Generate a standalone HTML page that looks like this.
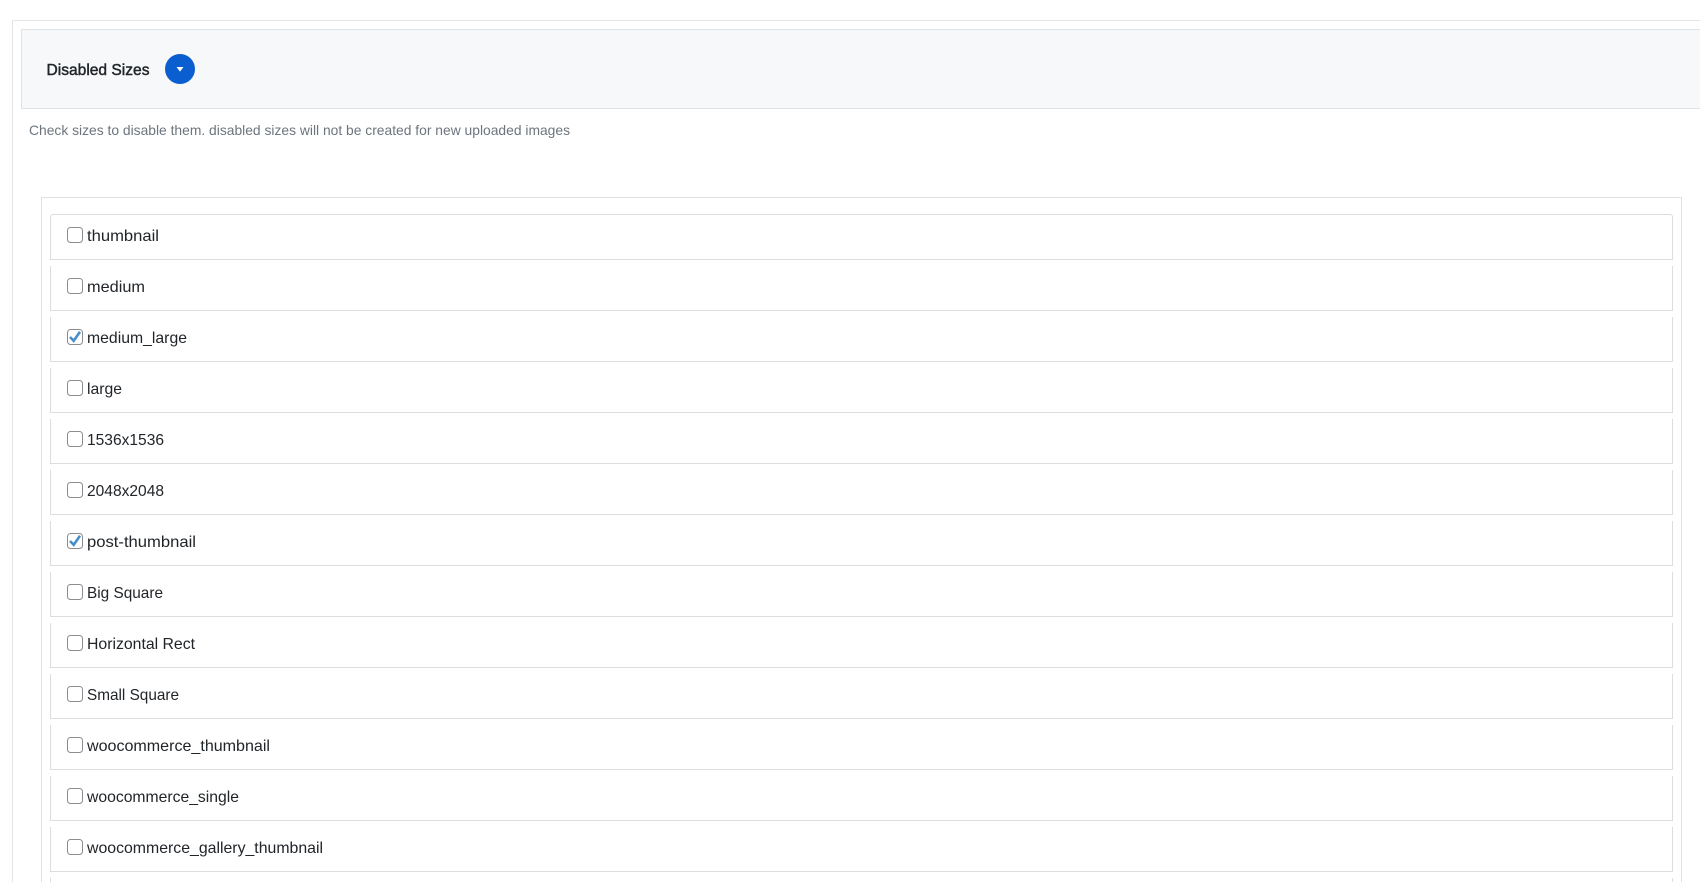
<!DOCTYPE html>
<html lang="en">
<head>
<meta charset="utf-8">
<title>Disabled Sizes</title>
<style>
html,body{margin:0;padding:0;width:1700px;height:882px;overflow:hidden;background:#fff}
#page{position:relative;width:1700px;height:882px;overflow:hidden;background:#fff}
.a{position:absolute;box-sizing:border-box}
#outer{left:12px;top:20px;width:1700px;height:900px;border:1px solid #e3e5ea}
#head{left:21px;top:29px;width:1700px;height:80px;background:#f7f8fa;border:1px solid #dfe2e7}
#inner{left:41px;top:197px;width:1641px;height:720px;border:1px solid #e0e0e0}
.it{left:50px;width:1623px;border-left:1px solid #ddd;border-right:1px solid #ddd;border-bottom:1px solid #ddd}
.cb{left:67px;width:16px;height:16px;border:1px solid #8c8c8c;border-radius:3.5px;background:#fff}
svg{position:absolute;left:0;top:0}
text{font-family:"Liberation Sans",sans-serif}
</style>
</head>
<body>
<div id="page">
<div class="a" id="outer"></div>
<div class="a" id="head"></div>
<div class="a" id="inner"></div>

<div class="a it" style="top:214px;height:46px;border-top:1px solid #ddd;border-top-right-radius:3px;border-top-left-radius:3px"></div>
<div class="a it" style="top:266px;height:45px"></div>
<div class="a it" style="top:317px;height:45px"></div>
<div class="a it" style="top:368px;height:45px"></div>
<div class="a it" style="top:419px;height:45px"></div>
<div class="a it" style="top:470px;height:45px"></div>
<div class="a it" style="top:521px;height:45px"></div>
<div class="a it" style="top:572px;height:45px"></div>
<div class="a it" style="top:623px;height:45px"></div>
<div class="a it" style="top:674px;height:45px"></div>
<div class="a it" style="top:725px;height:45px"></div>
<div class="a it" style="top:776px;height:45px"></div>
<div class="a it" style="top:827px;height:45px"></div>
<div class="a it" style="top:878px;height:45px"></div>

<div class="a cb" style="top:227px"></div>
<div class="a cb" style="top:278px"></div>
<div class="a cb" style="top:329px"></div>
<div class="a cb" style="top:380px"></div>
<div class="a cb" style="top:431px"></div>
<div class="a cb" style="top:482px"></div>
<div class="a cb" style="top:533px"></div>
<div class="a cb" style="top:584px"></div>
<div class="a cb" style="top:635px"></div>
<div class="a cb" style="top:686px"></div>
<div class="a cb" style="top:737px"></div>
<div class="a cb" style="top:788px"></div>
<div class="a cb" style="top:839px"></div>

<svg width="1700" height="882" viewBox="0 0 1700 882" xmlns="http://www.w3.org/2000/svg">
  <text x="46.5" y="75" font-size="16" fill="#212529" stroke="#212529" stroke-width="0.45" textLength="103" lengthAdjust="spacingAndGlyphs">Disabled Sizes</text>
  <circle cx="180" cy="69" r="15" fill="#0a5ecf"/>
  <path d="M176.5 67h7l-3.5 4.6z" fill="#fff"/>
  <text x="29" y="135" font-size="14" fill="#6c757d" textLength="541" lengthAdjust="spacingAndGlyphs">Check sizes to disable them. disabled sizes will not be created for new uploaded images</text>

  <g font-size="16" fill="#212529">
    <text x="87" y="241" textLength="72" lengthAdjust="spacingAndGlyphs">thumbnail</text>
    <text x="87" y="292" textLength="58" lengthAdjust="spacingAndGlyphs">medium</text>
    <text x="87" y="343" textLength="100" lengthAdjust="spacingAndGlyphs">medium_large</text>
    <text x="87" y="394" textLength="35" lengthAdjust="spacingAndGlyphs">large</text>
    <text x="87" y="445" textLength="77" lengthAdjust="spacingAndGlyphs">1536x1536</text>
    <text x="87" y="496" textLength="77" lengthAdjust="spacingAndGlyphs">2048x2048</text>
    <text x="87" y="547" textLength="109" lengthAdjust="spacingAndGlyphs">post-thumbnail</text>
    <text x="87" y="598" textLength="76" lengthAdjust="spacingAndGlyphs">Big Square</text>
    <text x="87" y="649" textLength="108" lengthAdjust="spacingAndGlyphs">Horizontal Rect</text>
    <text x="87" y="700" textLength="92" lengthAdjust="spacingAndGlyphs">Small Square</text>
    <text x="87" y="751" textLength="183" lengthAdjust="spacingAndGlyphs">woocommerce_thumbnail</text>
    <text x="87" y="802" textLength="152" lengthAdjust="spacingAndGlyphs">woocommerce_single</text>
    <text x="87" y="853" textLength="236" lengthAdjust="spacingAndGlyphs">woocommerce_gallery_thumbnail</text>
  </g>

  <path d="M70 337l3.7 3.8 6.3-9" fill="none" stroke="#4a8fca" stroke-width="2.6"/>
  <path d="M70 541l3.7 3.8 6.3-9" fill="none" stroke="#4a8fca" stroke-width="2.6"/>
</svg>
</div>
</body>
</html>
